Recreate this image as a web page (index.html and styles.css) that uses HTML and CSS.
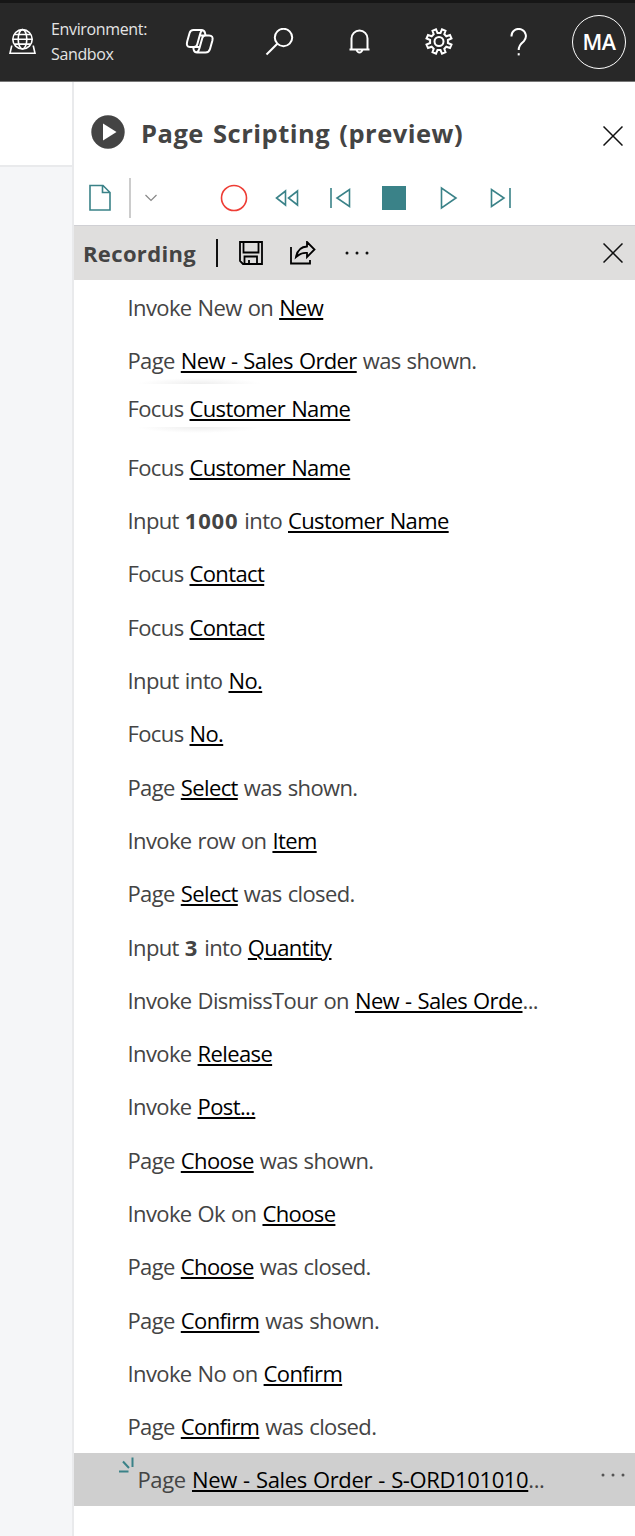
FILE: index.html
```html
<!DOCTYPE html>
<html lang="en">
<head>
    <meta charset="UTF-8">
    <meta name="viewport" content="width=device-width, initial-scale=1.0">
    <title>Page Scripting</title>
    <link rel="stylesheet" href="styles.css">
</head>
<body>
    <header class="topbar">
        <svg class="env-icon" width="28" height="28" viewBox="0 0 28 28">
            <circle cx="13.5" cy="11.3" r="9.7"/>
            <ellipse cx="13.5" cy="11.3" rx="4.3" ry="9.7"/>
            <path d="M3.8 11.3h19.4M5.5 6.5h16M5.5 16.1h16M3.4 18.2H2.6L1 25.2h25l-1.6-7h-.8"/>
        </svg>
        <div class="env-name">Environment:<br>Sandbox</div>
        <nav class="top-icons">
            <svg width="30" height="28" viewBox="0 0 30 28">
                <path d="M8.500 2H16.500Q19.300 2 20 5L20.600 7.500M8.500 2Q5.500 2 4.600 5L2.200 13.500Q.8 19 5 19H9Q11.500 19 12.200 16.500L15 6.500Q16.200 2 18 2.300M20.600 7.500H24Q28.600 7.500 27.400 12.500L25 21Q24 24.500 20.500 24.500H12Q9.500 24.500 8.800 22L8.200 19M20.600 7.500Q18 7.500 17.300 10L14.500 20Q13.200 24.500 11 24.500M8.200 19H14.500M15 7.500h5.600"/>
            </svg>
            <svg width="30" height="28" viewBox="0 0 30 28">
                <circle cx="18.500" cy="9.500" r="8.700"/>
                <path d="M12.300 15.700L1.500 26.500"/>
            </svg>
            <svg width="30" height="28" viewBox="0 0 30 28">
                <path d="M6.500 21.500V10.500a8 8 0 0 1 16 0V21.500M4.500 21.500h20M11.500 22q1 2.500 3 2.500t3-2.500"/>
            </svg>
            <svg width="30" height="28" viewBox="0 0 30 28">
                <circle cx="14" cy="13.500" r="4.500"/>
                <path d="M11 1.300L12.500 4.900H15.500L17 1.300L20.500 2.800L19.300 6.300L21.300 8.300L25 7L26.500 10.500L22.900 12V15L26.500 16.500L25 20L21.300 18.700L19.300 20.700L20.500 24.200L17 25.700L15.500 22.100H12.500L11 25.700L7.500 24.200L8.700 20.700L6.700 18.700L3 20L1.500 16.500L5.100 15V12L1.500 10.500L3 7L6.700 8.300L8.700 6.300L7.500 2.800Z"/>
            </svg>
            <svg width="30" height="28" viewBox="0 0 30 28">
                <path d="M6.500 8.500a7.200 7.200 0 1 1 12.300 4.700Q13.700 17.200 13.700 22"/>
                <path d="M13.700 25.200v2.200"/>
            </svg>
        </nav>
        <div class="avatar">MA</div>
    </header>

    <main class="page">
        <aside class="backdrop"></aside>
        <section class="pane">
            <div class="pane-header">
                <svg width="34" height="34" viewBox="0 0 34 34">
                    <circle cx="17" cy="17" r="16.700" fill="#444"/>
                    <path d="M12 8.500L25.500 17L12 25.500Z" fill="#fff"/>
                </svg>
                <h1>Page Scripting (preview)</h1>
                <svg class="close" width="20" height="20" viewBox="0 0 20 20"><path d="M.5.5l19 19M19.500.5l-19 19"/></svg>
            </div>

            <div class="toolbar">
                <svg class="new-file" width="24" height="28" viewBox="0 0 24 28">
                    <path d="M2 1.500h13l7 7v17.500H2zM14.500 1.500v7h7.500"/>
                </svg>
                <span class="split"></span>
                <svg class="chevron" width="12" height="8" viewBox="0 0 12 8"><path d="M.5 1l5.500 5.500L11.500 1"/></svg>
                <svg class="record" width="28" height="28" viewBox="0 0 28 28"><circle cx="14" cy="14" r="12.500"/></svg>
                <svg class="rewind" width="24" height="20" viewBox="0 0 24 20"><path d="M10.500 3v14L1.500 10zM22.500 3v14L13.500 10z"/></svg>
                <svg class="step-back" width="24" height="22" viewBox="0 0 24 22"><path d="M2 1v20M20.500 2.500v17L8 11z"/></svg>
                <span class="stop"></span>
                <svg class="play" width="18" height="24" viewBox="0 0 18 24"><path d="M1.500 2v20L16 12z"/></svg>
                <svg class="step-next" width="22" height="22" viewBox="0 0 22 22"><path d="M20 1v20M1.500 2.500v17L14 11z"/></svg>
            </div>

            <div class="recording">
                <h2>Recording</h2>
                <span class="bar"></span>
                <svg class="save" width="24" height="24" viewBox="0 0 24 24">
                    <path d="M1 1h22v22H4L1 20zM4.500 1v10.500h15V1M5.500 23v-7.500h12.500V23M10 23v-4"/>
                </svg>
                <svg class="share" width="28" height="24" viewBox="0 0 28 24">
                    <path d="M2 6v16.500h19v-3.500M18 1l7.500 7.500L18 16v-4q-6-.5-11 4Q9 6 18 5.500z"/>
                </svg>
                <svg class="dots" width="24" height="4" viewBox="0 0 24 4"><circle cx="2" cy="2" r="1.500"/><circle cx="12" cy="2" r="1.500"/><circle cx="22" cy="2" r="1.500"/></svg>
                <svg class="close" width="20" height="20" viewBox="0 0 20 20"><path d="M.5.5l19 19M19.500.5l-19 19"/></svg>
            </div>

            <ul class="steps">
                <li>Invoke New on <a>New</a></li>
                <li>Page <a>New - Sales Order</a> was shown.</li>
                <li class="raised">Focus <a>Customer Name</a></li>
                <li>Focus <a>Customer Name</a></li>
                <li>Input <b>1000</b> into <a>Customer Name</a></li>
                <li>Focus <a>Contact</a></li>
                <li>Focus <a>Contact</a></li>
                <li>Input into <a>No.</a></li>
                <li>Focus <a>No.</a></li>
                <li>Page <a>Select</a> was shown.</li>
                <li>Invoke row on <a>Item</a></li>
                <li>Page <a>Select</a> was closed.</li>
                <li>Input <b>3</b> into <a>Quantity</a></li>
                <li>Invoke DismissTour on <a>New - Sales Orde</a>...</li>
                <li>Invoke <a>Release</a></li>
                <li>Invoke <a>Post...</a></li>
                <li>Page <a>Choose</a> was shown.</li>
                <li>Invoke Ok on <a>Choose</a></li>
                <li>Page <a>Choose</a> was closed.</li>
                <li>Page <a>Confirm</a> was shown.</li>
                <li>Invoke No on <a>Confirm</a></li>
                <li>Page <a>Confirm</a> was closed.</li>
                <li class="current">
                    <svg class="spark" width="18" height="18" viewBox="0 0 18 18"><path d="M1 15.500h9.500M5 5.500l6 6.500M14.500 1.500v9.500"/></svg>
                    <span>Page <a>New - Sales Order - S-ORD101010</a>...</span>
                    <svg class="dots" width="24" height="4" viewBox="0 0 24 4"><circle cx="2" cy="2" r="1.500"/><circle cx="12" cy="2" r="1.500"/><circle cx="22" cy="2" r="1.500"/></svg>
                </li>
            </ul>
        </section>
    </main>
</body>
</html>
```
FILE: styles.css
```css
* {
    box-sizing: border-box;
}
body {
    margin: 0;
    height: 1536px;
    overflow: hidden;
    display: flex;
    flex-direction: column;
    font-family: "Open Sans", "Noto Sans", sans-serif;
    background-color: white;
    color: #444;
}
svg {
    display: block;
    flex: none;
    fill: none;
    stroke-width: 2;
}
.topbar {
    height: 82px;
    flex: none;
    display: flex;
    align-items: center;
    padding: 0 9px;
    background-color: #282828;
    border-top: 3px solid #161616;
    border-bottom: 1px solid #777;
}
.topbar svg {
    stroke: #fff;
}
.topbar .env-icon {
    stroke-width: 1.6;
}
.env-name {
    width: 134px;
    margin-left: 14px;
    font-size: 16px;
    letter-spacing: -0.35px;
    line-height: 25px;
    color: #e4e4e4;
}
.top-icons {
    display: flex;
    gap: 50px;
}
.avatar {
    width: 54px;
    height: 54px;
    margin-left: auto;
    border: 1.5px solid #fff;
    border-radius: 50%;
    color: #fff;
    font-size: 21.5px;
    font-weight: 600;
    letter-spacing: -0.5px;
    line-height: 52px;
    text-align: center;
}
.page {
    flex: 1;
    display: flex;
}
.backdrop {
    width: 74px;
    border-right: 2px solid #e9eaec;
    background-color: #f5f6f8;
}
.backdrop::before {
    content: '';
    display: block;
    height: 83px;
    background-color: #fff;
    border-bottom: 2px solid #e9eaec;
}
.pane {
    flex: 1;
    min-width: 0;
}
.pane-header {
    height: 89px;
    display: flex;
    align-items: center;
    padding: 11px 12.5px 0 16.5px;
}
h1, h2 {
    margin: 0;
    font-weight: bold;
    white-space: nowrap;
}
h1 {
    margin-left: 16.5px;
    padding-top: 2px;
    font-size: 25.5px;
    letter-spacing: 0.5px;
    word-spacing: 2px;
    line-height: 36px;
}
.close {
    margin-left: auto;
    stroke: #111;
    stroke-width: 1.5;
}
.pane-header .close {
    margin-top: 8px;
}
.toolbar {
    height: 55px;
    display: flex;
    align-items: center;
    padding-left: 14px;
    border-bottom: 1px solid #d0d0d4;
}
.toolbar svg {
    stroke: #3a8288;
    stroke-width: 1.6;
}
.split {
    width: 2px;
    height: 40px;
    margin-left: 17px;
    background-color: #ccc;
}
.toolbar .chevron {
    margin-left: 14px;
    stroke: #888;
    stroke-width: 1.2;
}
.toolbar .record {
    margin-left: 63px;
    stroke: #ee3d35;
}
.rewind {
    margin-left: 27px;
}
.step-back {
    margin-left: 30px;
}
.stop {
    width: 24px;
    height: 24px;
    margin-left: 29px;
    background-color: #3a8288;
}
.play {
    margin-left: 34px;
}
.step-next {
    margin-left: 32px;
}
.recording {
    height: 54px;
    display: flex;
    align-items: center;
    padding: 0 12.5px 0 9px;
    background-color: #dfdedd;
    stroke: #000;
}
h2 {
    width: 113px;
    font-size: 22px;
    letter-spacing: 0.35px;
    line-height: 30px;
}
.bar {
    width: 2px;
    height: 28px;
    margin-left: 20px;
    background-color: #111;
}
.save {
    margin-left: 21px;
}
.share {
    margin-left: 26px;
}
.save, .share {
    stroke-width: 1.8;
}
.dots {
    fill: #111;
    stroke: none;
}
.recording .dots {
    margin-left: 28px;
}
.steps {
    list-style: none;
    margin: 0;
    padding: 0;
    font-size: 22px;
    letter-spacing: -0.62px;
    word-spacing: 0.9px;
}
.steps li {
    height: 53.31px;
    padding-left: 53.5px;
    line-height: 54px;
    white-space: nowrap;
}
.steps b {
    letter-spacing: 0.8px;
}
.steps a {
    color: #000;
    text-decoration: underline;
    text-decoration-thickness: 2px;
    text-underline-offset: 2px;
}
/* the step card lifted above its neighbours, with a faint shadow on both edges */
.steps .raised {
    height: 46px;
    margin-bottom: 7.31px;
    line-height: 42px;
    position: relative;
}
.steps .raised::before,
.steps .raised::after {
    content: '';
    position: absolute;
    left: 60px;
    width: 130px;
    height: 6px;
}
.steps .raised::before {
    top: -9px;
    background: radial-gradient(ellipse 62px 6px at 50% 100%, #eee, #fff0);
}
.steps .raised::after {
    top: 40px;
    background: radial-gradient(ellipse 62px 6px at 50% 0, #eee, #fff0);
}
.steps .current {
    display: flex;
    align-items: center;
    padding: 0 10px 0 44px;
    background-color: #cfcfcf;
    letter-spacing: -0.38px;
}
.spark {
    margin: -28px 1.5px 0 0;
    stroke: #3a8288;
}
.current .dots {
    margin: -8px 0 0 auto;
    fill: #555;
}
```
